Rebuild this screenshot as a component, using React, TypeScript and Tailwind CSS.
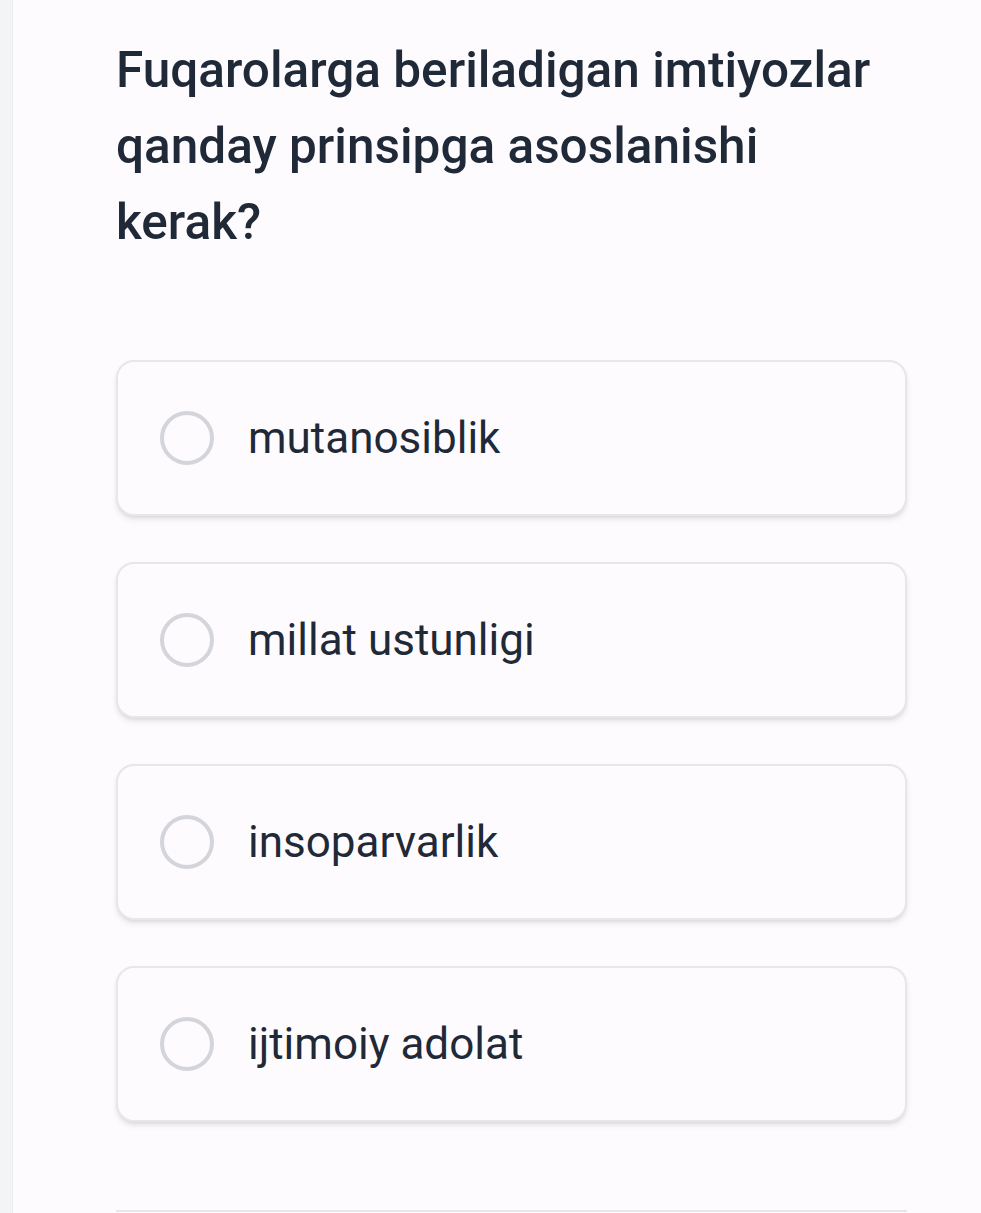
const options = ["mutanosiblik", "millat ustunligi", "insoparvarlik", "ijtimoiy adolat"];

export default function App() {
    return (
        <div className="flex min-h-[1213px] bg-[#fdfbfd]" style={{ fontFamily: "Roboto, 'Noto Sans', sans-serif" }}>
            {/* left edge strip */}
            <div className="w-[13px] shrink-0 bg-[#f3f4f6] border-r border-[#eceef1]" />

            <main className="ml-[103px] w-[791px] pt-[32px]">
                <h1 className="text-[49.5px] leading-[76px] font-medium text-[#1f2937]">
                    Fuqarolarga beriladigan imtiyozlar qanday prinsipga asoslanishi kerak?
                </h1>

                <div className="mt-[100px] flex flex-col gap-[46px]">
                    {options.map((opt) => (
                        <button key={opt} className="flex items-center h-[156px] w-full rounded-[18px] border-2 border-[#e5e7eb] bg-[#fdfbfd] shadow-md pl-[42px] text-left">
                            <span className="w-[54px] h-[54px] rounded-full border-4 border-[#d4d5da] shrink-0" />
                            <span className="ml-[34px] text-[44px] text-[#1f2937]">{opt}</span>
                        </button>
                    ))}
                </div>

                <div className="mt-[88px] border-t-2 border-[#e5e7eb]" />
            </main>
        </div>
    );
}
